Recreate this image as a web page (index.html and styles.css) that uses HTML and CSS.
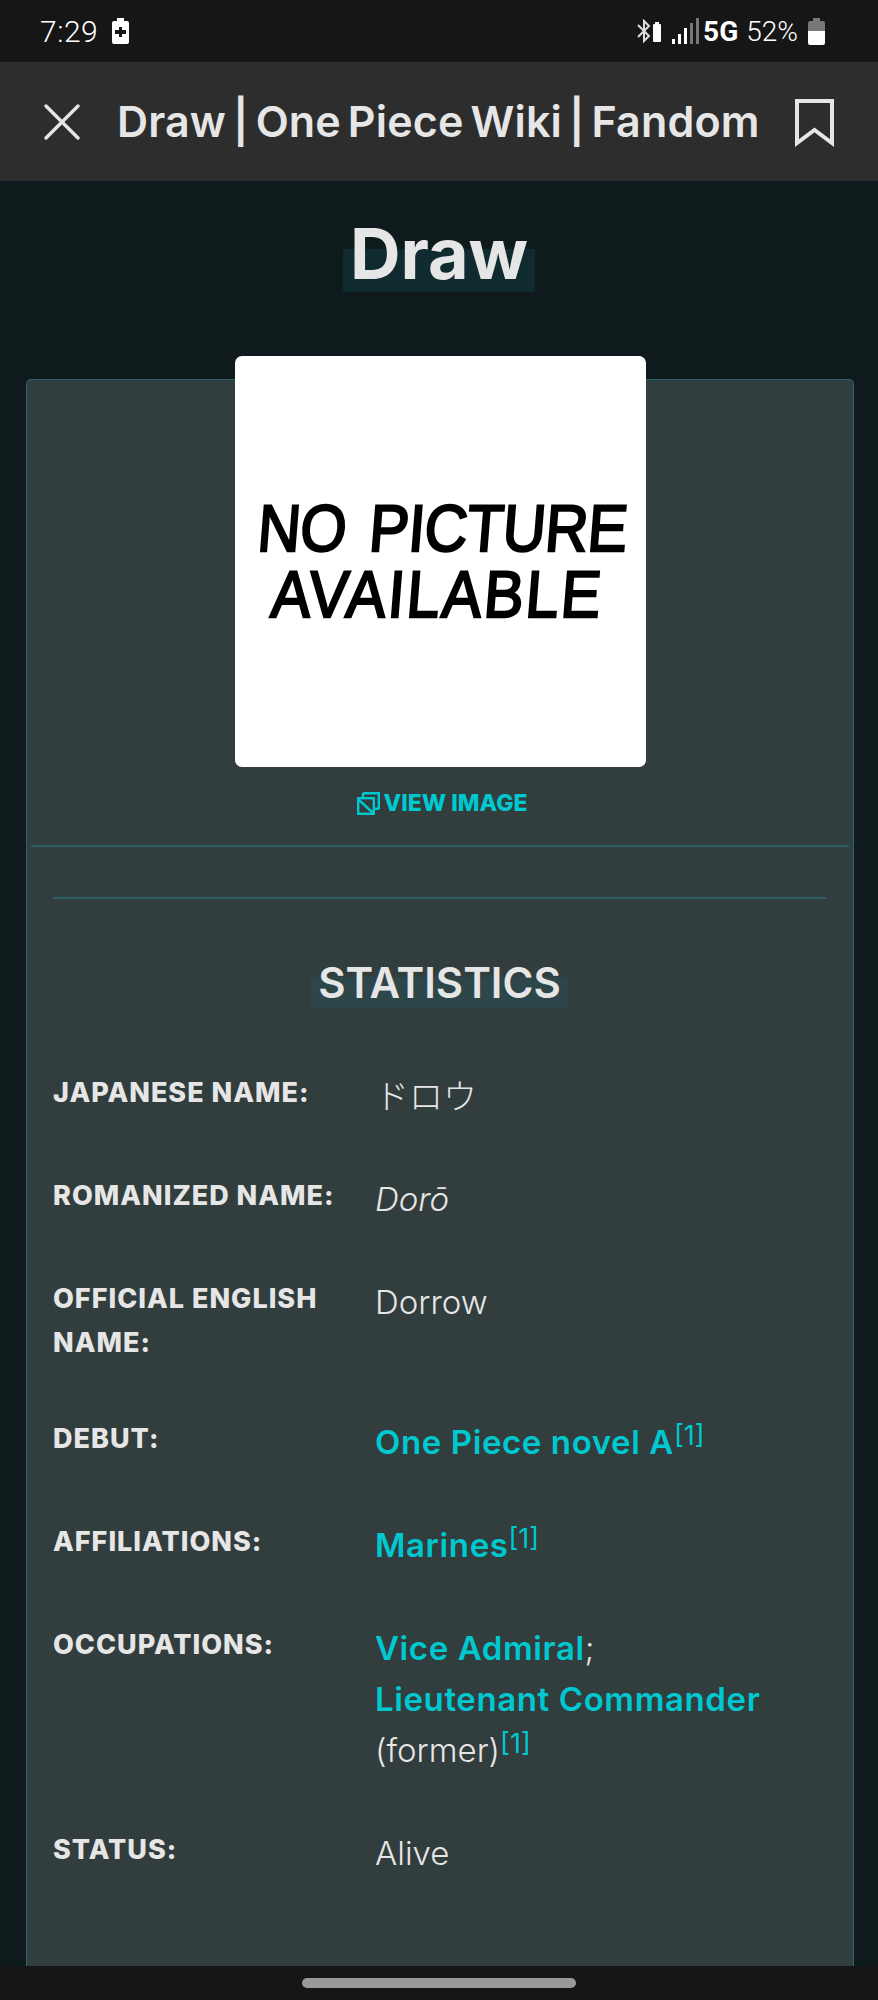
FILE: index.html
```html
<!DOCTYPE html>
<html lang="en">
<head>
<meta charset="utf-8">
<title>Draw | One Piece Wiki | Fandom</title>
<link rel="stylesheet" href="styles.css">
</head>
<body>
<div class="screen">
  <header class="status">
    <div class="status-left">
      <span class="time">7:29</span>
      <svg class="ic-saver" viewBox="0 0 17 26"><path fill="#fff" fill-rule="evenodd" d="M5 0h7v3h3a2 2 0 0 1 2 2v19a2 2 0 0 1-2 2H2a2 2 0 0 1-2-2V5a2 2 0 0 1 2-2h3zM7 9v3H3v4h4v3h3v-3h4v-4h-4V9z"/></svg>
    </div>
    <div class="status-right">
      <svg class="ic-bt" viewBox="0 0 26 24"><path fill="none" stroke="#ddd" stroke-width="2" d="M2 6l11 11-5 5V2l5 5L2 18"/><rect x="17" y="5" width="8" height="18" rx="1" fill="#fff"/><rect x="19" y="3" width="4" height="3" fill="#fff"/></svg>
      <svg class="ic-signal" viewBox="0 0 27 26"><rect x="0" y="21" width="3" height="5" fill="#fff"/><rect x="6" y="16" width="3" height="10" fill="#fff"/><rect x="12" y="10" width="3" height="16" fill="#fff"/><rect x="18" y="5" width="3" height="21" fill="#777"/><rect x="24" y="0" width="3" height="26" fill="#777"/></svg>
      <span class="net">5G</span>
      <span class="pct">52%</span>
      <svg class="ic-batt" viewBox="0 0 17 27"><path fill="#777" d="M5 0h7v3h3a2 2 0 0 1 2 2v8H0V5a2 2 0 0 1 2-2h3z"/><path fill="#fff" d="M0 13h17v12a2 2 0 0 1-2 2H2a2 2 0 0 1-2-2z"/></svg>
    </div>
  </header>

  <nav class="toolbar">
    <svg class="ic-close" viewBox="0 0 36 36"><path fill="none" stroke="#e6e6e6" stroke-width="3.4" stroke-linecap="round" d="M2 2l32 32M34 2L2 34"/></svg>
    <span class="tab-title">Draw | One Piece Wiki | Fandom</span>
    <svg class="ic-bookmark" viewBox="0 0 39 48"><path fill="none" stroke="#e6e6e6" stroke-width="4" d="M2 2h35v42L19.5 31 2 44z"/></svg>
  </nav>

  <main class="page">
    <h1 class="page-title"><span>Draw</span></h1>
    <section class="infobox">
      <div class="figure-wrap">
        <div class="picture">
          <p class="no-pic"><span class="no-line-a">NO PICTURE</span><br><span class="no-line-b">AVAILABLE</span></p>
        </div>
        <a class="view-image">
          <svg class="ic-view" viewBox="0 0 23 23"><g fill="none" stroke="#00c8d0" stroke-width="2.4"><path d="M6 1.2h15.8V17"/><path d="M6 1v5M17 16.8h5"/><rect x="1.2" y="6.2" width="15.6" height="15.6"/><path d="M2 8l14 13"/></g></svg>
          <span>VIEW IMAGE</span>
        </a>
      </div>
      <div class="stats">
        <hr class="rule">
        <h2 class="stats-title"><span>STATISTICS</span></h2>
        <dl class="rows">
          <div class="row"><dt>JAPANESE NAME:</dt><dd class="jp">ドロウ</dd></div>
          <div class="row"><dt>ROMANIZED NAME:</dt><dd><i>Dorō</i></dd></div>
          <div class="row"><dt>OFFICIAL ENGLISH NAME:</dt><dd>Dorrow</dd></div>
          <div class="row"><dt>DEBUT:</dt><dd><a class="lnk">One Piece novel A</a><sup>[1]</sup></dd></div>
          <div class="row"><dt>AFFILIATIONS:</dt><dd><a class="lnk">Marines</a><sup>[1]</sup></dd></div>
          <div class="row"><dt>OCCUPATIONS:</dt><dd><a class="lnk">Vice Admiral</a>;<br><a class="lnk">Lieutenant Commander</a><br>(former)<sup>[1]</sup></dd></div>
          <div class="row"><dt>STATUS:</dt><dd>Alive</dd></div>
        </dl>
      </div>
    </section>
  </main>

  <footer class="navbar"><div class="pill"></div></footer>
</div>
</body>
</html>
```
FILE: styles.css
```css
* { box-sizing: border-box; }
html, body { margin: 0; padding: 0; background: #0e1a1b; }
.screen {
  width: 878px; height: 2000px; display: flex; flex-direction: column;
  overflow: hidden; font-family: Inter, Roboto, "Noto Sans CJK JP", sans-serif; color: #e6e6e6;
}
.status {
  height: 62px; flex: none; background: #161616; display: flex;
  justify-content: space-between; align-items: center; padding: 0 53px 0 40px;
  font-family: Roboto, sans-serif; color: #fff;
}
.status-left, .status-right { display: flex; align-items: center; }
.time { font-size: 30px; font-weight: 300; letter-spacing: .5px; }
.ic-saver { width: 17px; height: 26px; margin-left: 14px; }
.ic-bt { width: 26px; height: 24px; }
.ic-signal { width: 27px; height: 26px; margin-left: 10px; }
.net { font-size: 28px; font-weight: 700; margin-left: 4px; }
.pct { font-size: 28px; font-weight: 300; margin-left: 8px; }
.ic-batt { width: 17px; height: 27px; margin-left: 10px; }

.toolbar {
  height: 119px; flex: none; background: #2d2d2d; display: flex; align-items: center;
  padding: 0 44px 0 44px;
}
.ic-close { width: 36px; height: 36px; flex: none; }
.tab-title { font-size: 43px; font-weight: 600; margin-left: 37px; white-space: nowrap; flex: 1; word-spacing: -4px; letter-spacing: .15px; margin-top: -2px; }
.ic-bookmark { width: 39px; height: 48px; flex: none; margin-top: 3px; }

.page { flex: 1; min-height: 0; display: flex; flex-direction: column; overflow: hidden; }
.page-title {
  margin: 0; height: 175px; padding-top: 35px; text-align: center;
  font-size: 70px; line-height: 76px; font-weight: 700;
}
.page-title span {
  display: inline-block; padding: 0 7px; height: 76px;
  background: linear-gradient(to bottom, transparent 33px, #0f2b30 33px);
}
.infobox {
  position: relative; flex: 1; margin: 23px 24px 0 26px;
  background: #323d3d; border: 1px solid #2a6670; border-bottom: 0; border-radius: 5px 5px 0 0;
}
.figure-wrap {
  display: flex; flex-direction: column; align-items: center; height: 467px;
  margin: 0 4px; border-bottom: 2px solid #2a5f68;
}
.picture {
  width: 411px; height: 411px; flex: none; margin-top: -24px; background: #fff; border-radius: 7px;
  display: flex; align-items: center; justify-content: center;
}
.no-pic {
  margin: -2px 0 0; color: #000; text-align: center; font-family: "Liberation Sans", sans-serif;
  font-size: 66px; line-height: 66px; font-weight: 400; word-spacing: 8px;
  -webkit-text-stroke: 2.4px #000; white-space: nowrap; transform: scaleX(.9) skewX(-5deg);
}
.no-line-a { letter-spacing: -.5px; }
.no-line-b { letter-spacing: 2.5px; }
.view-image {
  display: flex; align-items: center; gap: 4px; margin-top: 24px; margin-left: 4px;
  color: #00c8d0; font-size: 23px; font-weight: 800; line-height: 24px;
}
.ic-view { width: 23px; height: 23px; flex: none; }

.stats { padding: 0 27px 0 26px; }
.rule { margin: 50px 0 0; height: 2px; border: 0; background: #2a5f68; }
.stats-title { margin: 59px 0 0; text-align: center; font-size: 42px; line-height: 50px; font-weight: 600; }
.stats-title span {
  display: inline-block; padding: 0 7px; height: 50px;
  background: linear-gradient(to bottom, transparent 19px, #2c4649 19px);
}
.rows { margin: 63px 0 0; }
.row { display: grid; grid-template-columns: 322px 1fr; margin-bottom: 52px; }
.row dt { font-size: 27px; line-height: 44px; font-weight: 800; padding-right: 20px; letter-spacing: 1px; }
.row dd { margin: 0; font-size: 33px; line-height: 51px; font-weight: 300; }
.row dd.jp { font-family: "Noto Sans CJK JP", sans-serif; font-weight: 300; font-size: 34px; line-height: 48px; padding-bottom: 3px; }
.lnk { color: #00c8d0; font-weight: 600; letter-spacing: .6px; }
sup { color: #00c8d0; font-size: 27px; line-height: 0; font-weight: 400; vertical-align: 9px; }

.navbar {
  height: 34px; flex: none; background: #161616; display: flex; justify-content: center; padding-top: 12px;
}
.pill { width: 274px; height: 10px; border-radius: 5px; background: #999; }
```
